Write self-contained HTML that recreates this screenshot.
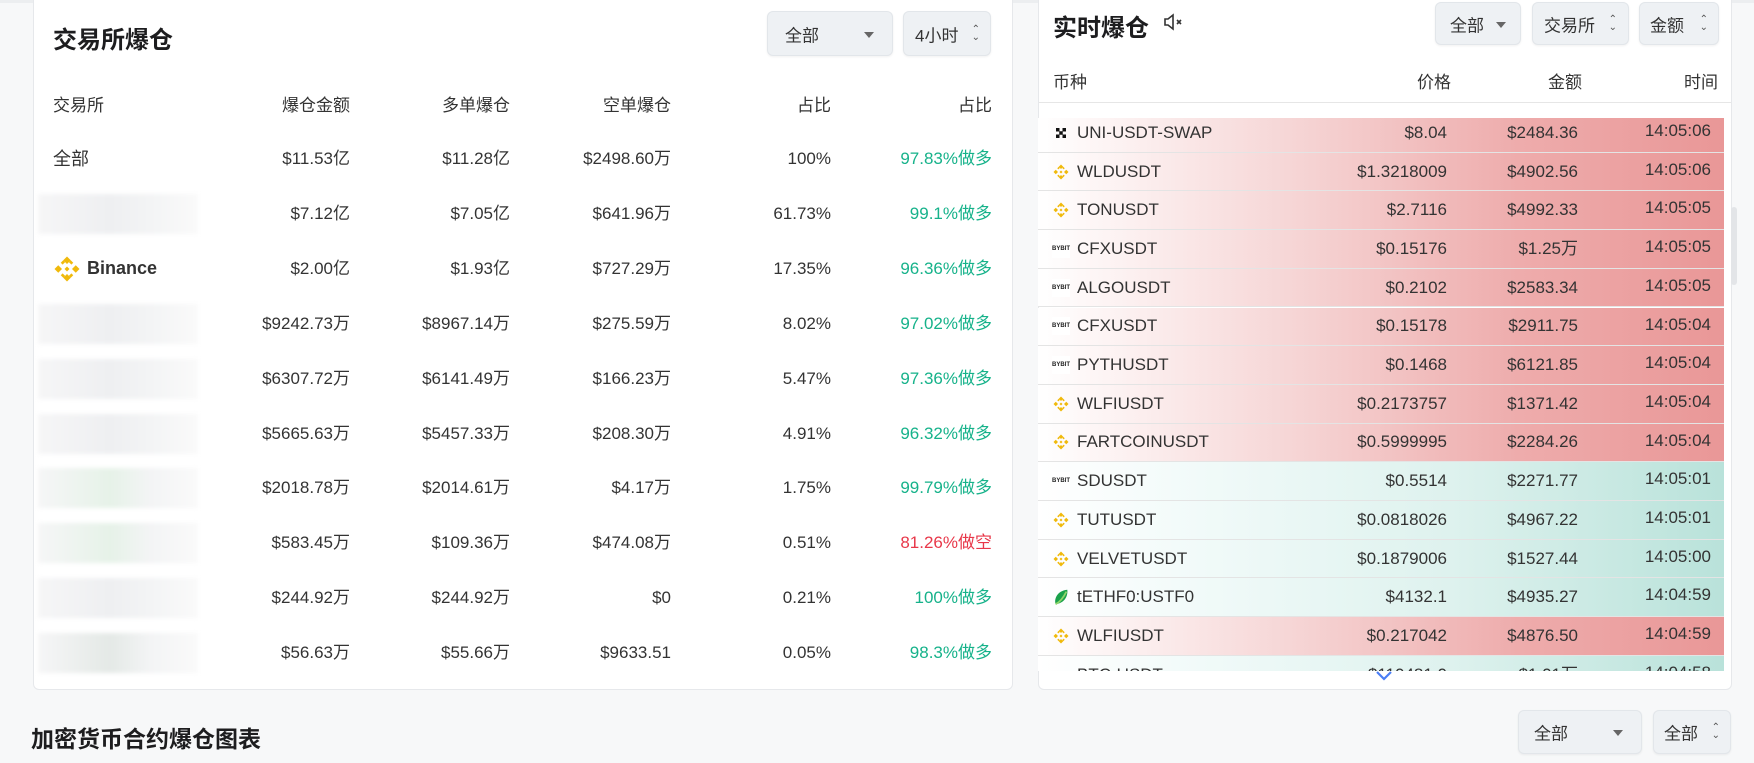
<!DOCTYPE html>
<html><head><meta charset="utf-8">
<style>
*{box-sizing:border-box;margin:0;padding:0}
body{width:1754px;height:763px;overflow:hidden;background:#f7f8f9;font-family:"Liberation Sans","Noto Sans CJK SC",sans-serif;color:#333;position:relative}
.card{position:absolute;background:#fff;border:1px solid #e6e8eb;border-radius:6px}
.title{position:absolute;font-weight:bold;font-size:24px;color:#1d1d1f}
.btn{position:absolute;background:#eef1f4;border:1px solid #e2e6ea;border-radius:6px;font-size:17px;color:#333;box-shadow:0 1px 2px rgba(0,0,0,.06)}
.btn span{position:absolute;top:50%;transform:translateY(-50%)}
.tri{position:absolute;top:50%;margin-top:-2px;width:0;height:0;border-left:5px solid transparent;border-right:5px solid transparent;border-top:6px solid #666}
.ud{position:absolute;top:50%;transform:translateY(-50%);font-size:10px;line-height:8px;color:#555;text-align:center}
.c{position:absolute;font-size:17px;line-height:24px;height:24px;margin-top:-12px;color:#333;text-align:right;white-space:nowrap}
.g{color:#16b28a}.r{color:#e8384a}
.blob{position:absolute;filter:blur(2px)}
.row{position:absolute;left:1038px;width:686px;height:38px;border-bottom:1px solid #e4e4e4}
.red{background:linear-gradient(90deg,#fff 0%,#fdf4f4 10%,#f5d2d2 40%,#eeacac 70%,#e99797 100%)}
.grn{background:linear-gradient(90deg,#fff 0%,#f3fbfa 20%,#def2ee 60%,#b9e2da 100%)}
.row span.n,.row span.p,.row span.a{position:absolute;top:50%;line-height:24px;margin-top:-12px;font-size:17px;color:#333}
.row .n{left:39px}
.row .p{right:277px}
.row .a{right:146px}
.row .t{position:absolute;right:13px;top:5px;font-size:17px;line-height:24px}
.row .ic{position:absolute;left:14px;top:50%;transform:translateY(-50%);width:18px;height:18px}
</style></head><body>
<div style="position:absolute;left:0;top:0;width:1754px;height:3px;background:#eceef0"></div>

<div class="card" style="left:33px;top:-6px;width:980px;height:696px"></div>
<div class="title" style="left:53px;top:20px">交易所爆仓</div>
<div class="btn" style="left:767px;top:11px;width:126px;height:45px"><span style="left:17px">全部</span><i class="tri" style="right:18px"></i></div>
<div class="btn" style="left:903px;top:11px;width:88px;height:45px"><span style="left:11px">4小时</span><div class="ud" style="right:10px">⌃<br>⌄</div></div>

<div class="c" style="left:53px;top:106px;text-align:left">交易所</div>
<div class="c" style="right:1404px;top:106px">爆仓金额</div>
<div class="c" style="right:1244px;top:106px">多单爆仓</div>
<div class="c" style="right:1083px;top:106px">空单爆仓</div>
<div class="c" style="right:923px;top:106px">占比</div>
<div class="c" style="right:762px;top:106px">占比</div>

<div id="rows"></div>
<script>
var d=[["全部","$11.53亿","$11.28亿","$2498.60万","100%","97.83%做多","g"],
["","$7.12亿","$7.05亿","$641.96万","61.73%","99.1%做多","g"],
["B","$2.00亿","$1.93亿","$727.29万","17.35%","96.36%做多","g"],
["","$9242.73万","$8967.14万","$275.59万","8.02%","97.02%做多","g"],
["","$6307.72万","$6141.49万","$166.23万","5.47%","97.36%做多","g"],
["","$5665.63万","$5457.33万","$208.30万","4.91%","96.32%做多","g"],
["","$2018.78万","$2014.61万","$4.17万","1.75%","99.79%做多","g"],
["","$583.45万","$109.36万","$474.08万","0.51%","81.26%做空","r"],
["","$244.92万","$244.92万","$0","0.21%","100%做多","g"],
["","$56.63万","$55.66万","$9633.51","0.05%","98.3%做多","g"]];
var bn='<svg width="30" height="30" viewBox="0 0 24 24"><g fill="#f0b90b"><path d="M12 2l3 3-3 3-3-3z"/><path d="M12 16l3 3-3 3-3-3z"/><path d="M2 12l3-3 3 3-3 3z"/><path d="M16 12l3-3 3 3-3 3z"/><path d="M12 10l2 2-2 2-2-2z"/><path d="M7 7l2-2 1.5 1.5-2 2z"/><path d="M17 7l-2-2-1.5 1.5 2 2z"/><path d="M7 17l2 2 1.5-1.5-2-2z"/><path d="M17 17l-2 2-1.5-1.5 2-2z"/></g></svg>';
var h='';var rr=[1404,1244,1083,923,762];
d.forEach(function(r,i){var y=159+54.9*i;
if(r[0]=="全部")h+='<div class="c" style="left:53px;top:'+y+'px;text-align:left;font-size:18px">全部</div>';
else if(r[0]=="B")h+='<div style="position:absolute;left:52px;top:'+(y-15)+'px;height:30px;display:flex;align-items:center;font-size:18px;font-weight:bold;color:#333">'+bn+'<span style="margin-left:5px">Binance</span></div>';
else{var gc=(i==6||i==7)?'#e6f2e8':(i==9?'#e4e9e6':'#eeeff1');h+='<div class="blob" style="left:38px;top:'+(y-20)+'px;width:160px;height:40px;background:linear-gradient(90deg,#f6f6f7,'+gc+' 45%,#f3f4f5 70%,#fafafa)"></div>';}
for(var k=0;k<5;k++)h+='<div class="c'+(k==4?' '+r[6]:'')+'" style="right:'+rr[k]+'px;top:'+y+'px">'+r[k+1]+'</div>';});
document.getElementById('rows').innerHTML=h;
</script>

<div class="card" style="left:1038px;top:-6px;width:694px;height:696px"></div>
<div class="title" style="left:1053px;top:8px">实时爆仓</div>
<svg style="position:absolute;left:1163px;top:12px" width="22" height="20" viewBox="0 0 22 20"><path d="M2 7h3l5-4v14l-5-4H2z" fill="none" stroke="#333" stroke-width="1.6"/><path d="M14 8l4 4M18 8l-4 4" stroke="#333" stroke-width="1.6"/></svg>
<div class="btn" style="left:1435px;top:2px;width:86px;height:43px"><span style="left:14px">全部</span><i class="tri" style="right:14px"></i></div>
<div class="btn" style="left:1532px;top:2px;width:97px;height:43px"><span style="left:11px">交易所</span><div class="ud" style="right:11px">⌃<br>⌄</div></div>
<div class="btn" style="left:1639px;top:2px;width:80px;height:43px"><span style="left:10px">金额</span><div class="ud" style="right:10px">⌃<br>⌄</div></div>
<div class="c" style="left:1053px;top:83px;text-align:left">币种</div>
<div class="c" style="right:303px;top:83px">价格</div>
<div class="c" style="right:172px;top:83px">金额</div>
<div class="c" style="right:36px;top:83px">时间</div>
<div style="position:absolute;left:1039px;top:102px;width:692px;height:1px;background:#e6e6e6"></div>
<div style="position:absolute;left:1731px;top:207px;width:6px;height:78px;background:#e3e5e8;border-radius:3px"></div>
<div style="position:absolute;left:1038px;top:118px;width:690px;height:553px;overflow:hidden">
<div id="rt" style="position:absolute;left:-1038px;top:-118px;width:1754px;height:800px"></div></div>
<svg style="position:absolute;left:1374px;top:670px" width="20" height="12" viewBox="0 0 20 12"><path d="M3 2l7 7 7-7" fill="none" stroke="#4a7ef5" stroke-width="2.2"/></svg>
<script>
var bi='<svg class="ic" viewBox="0 0 24 24"><g fill="#f0b90b"><path d="M12 2l3 3-3 3-3-3z"/><path d="M12 16l3 3-3 3-3-3z"/><path d="M2 12l3-3 3 3-3 3z"/><path d="M16 12l3-3 3 3-3 3z"/><path d="M12 10l2 2-2 2-2-2z"/><path d="M7 7l2-2 1.5 1.5-2 2z"/><path d="M17 7l-2-2-1.5 1.5 2 2z"/><path d="M7 17l2 2 1.5-1.5-2-2z"/><path d="M17 17l-2 2-1.5-1.5 2-2z"/></g></svg>';
var by='<span class="ic" style="font-size:6px;font-weight:bold;line-height:18px;color:#222;background:#fff">BYBIT</span>';
var ok='<svg class="ic" viewBox="0 0 18 18"><g fill="#111"><rect x="4" y="4" width="3.5" height="3.5"/><rect x="10.5" y="4" width="3.5" height="3.5"/><rect x="7.25" y="7.25" width="3.5" height="3.5"/><rect x="4" y="10.5" width="3.5" height="3.5"/><rect x="10.5" y="10.5" width="3.5" height="3.5"/></g></svg>';
var bf='<svg class="ic" viewBox="0 0 20 20"><path d="M4 18C2 12 6 3 17 2c1 8-4 15-13 16z" fill="#1aa14a"/><path d="M4 18c4-2 8-6 12-14" stroke="#8fd46a" stroke-width="2" fill="none"/></svg>';
var bl='<span class="ic" style="color:#4a7ef5;font-size:14px">●</span>';
var R=[[ok,"UNI-USDT-SWAP","$8.04","$2484.36","14:05:06",1],[bi,"WLDUSDT","$1.3218009","$4902.56","14:05:06",1],[bi,"TONUSDT","$2.7116","$4992.33","14:05:05",1],[by,"CFXUSDT","$0.15176","$1.25万","14:05:05",1],[by,"ALGOUSDT","$0.2102","$2583.34","14:05:05",1],[by,"CFXUSDT","$0.15178","$2911.75","14:05:04",1],[by,"PYTHUSDT","$0.1468","$6121.85","14:05:04",1],[bi,"WLFIUSDT","$0.2173757","$1371.42","14:05:04",1],[bi,"FARTCOINUSDT","$0.5999995","$2284.26","14:05:04",1],[by,"SDUSDT","$0.5514","$2271.77","14:05:01",0],[bi,"TUTUSDT","$0.0818026","$4967.22","14:05:01",0],[bi,"VELVETUSDT","$0.1879006","$1527.44","14:05:00",0],[bf,"tETHF0:USTF0","$4132.1","$4935.27","14:04:59",0],[bi,"WLFIUSDT","$0.217042","$4876.50","14:04:59",1],[bl,"BTC-USDT","$110481.0","$1.01万","14:04:58",0]];
var s='';R.forEach(function(r,i){var y=114+38.7*i;s+='<div class="row '+(r[5]?'red':'grn')+'" style="top:'+y+'px;height:38.7px">'+r[0]+'<span class="n">'+r[1]+'</span><span class="p">'+r[2]+'</span><span class="a">'+r[3]+'</span><span class="t">'+r[4]+'</span></div>';});
document.getElementById('rt').innerHTML=s;
</script>

<div class="title" style="left:31px;top:720px;font-size:23px">加密货币合约爆仓图表</div>
<div class="btn" style="left:1518px;top:710px;width:124px;height:44px"><span style="left:15px">全部</span><i class="tri" style="right:18px"></i></div>
<div class="btn" style="left:1653px;top:710px;width:78px;height:44px"><span style="left:10px">全部</span><div class="ud" style="right:10px">⌃<br>⌄</div></div>
</body></html>
